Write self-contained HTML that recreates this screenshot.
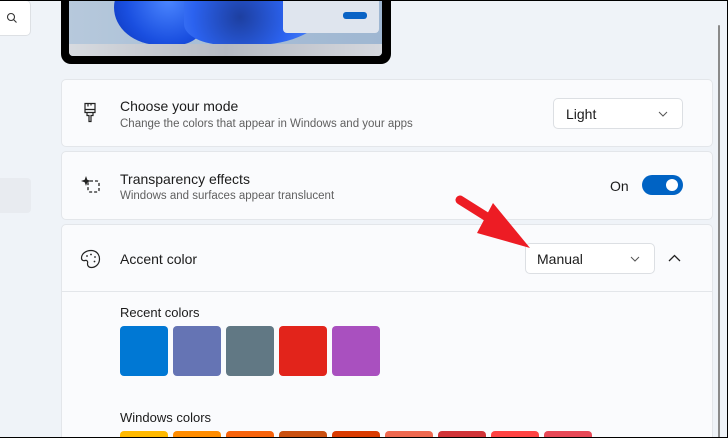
<!DOCTYPE html>
<html style="width:728px;height:438px;overflow:hidden"><head><style>
*{margin:0;padding:0;box-sizing:border-box}
body{width:728px;height:438px;overflow:hidden;background:#eff3f8;font-family:"Liberation Sans",sans-serif;position:relative;color:#1b1b1b}
.abs{position:absolute}
.card{position:absolute;left:61px;width:652px;background:#fafbfd;border:1px solid #e3e6ea;border-radius:5px}
.t{position:absolute;left:58px;font-size:14px;color:#1b1b1b}
.s{position:absolute;left:58px;font-size:11.5px;color:#5f5f5f}
.dd{position:absolute;background:#fff;border:1px solid #dcdfe3;border-radius:5px;font-size:14px}
.sw{position:absolute;width:48px;height:50px;border-radius:4px}
.ws{position:absolute;top:431px;width:48px;height:7px;border-radius:4px 4px 0 0}
</style></head><body>
<div class="abs" style="left:0;top:0;width:31px;height:36px;background:#fff;border:1px solid #dde0e4;border-left:none;border-radius:0 5px 5px 0"></div>
<svg class="abs" style="left:6px;top:12px" width="12" height="12"><circle cx="5" cy="5" r="3.5" fill="none" stroke="#333" stroke-width="1.1"/><line x1="7.6" y1="7.6" x2="10.5" y2="10.5" stroke="#333" stroke-width="1.1"/></svg>
<div class="abs" style="left:0;top:178px;width:31px;height:35px;background:#e8ebf0;border-radius:0 4px 4px 0"></div>
<div class="abs" style="left:61px;top:-10px;width:330px;height:74px;background:#000;border-radius:0 0 10px 10px"></div>
<div class="abs" style="left:69px;top:0;width:313px;height:56px;border-radius:0 0 4px 4px;overflow:hidden;background:linear-gradient(90deg,#b7c9dc,#a9bfd6 40%,#9fb7d2)">
 <div class="abs" style="left:45px;top:-30px;width:90px;height:75px;border-radius:50% 40% 30% 50%;background:radial-gradient(circle at 60% 40%,#4b86ff,#1a4fe0 60%,#0b35b8)"></div>
 <div class="abs" style="left:115px;top:-25px;width:140px;height:70px;border-radius:40% 50% 50% 30%;background:radial-gradient(circle at 40% 60%,#1d3fa0,#2b62ef 50%,#5b95ff)"></div>
 <div class="abs" style="left:214px;top:0;width:96px;height:33px;background:#dfe5ee;border-radius:0 0 4px 4px"></div>
 <div class="abs" style="left:274px;top:12px;width:24px;height:7px;background:#0a63c5;border-radius:3px"></div>
 <div class="abs" style="left:0;top:44px;width:313px;height:12px;background:linear-gradient(90deg,#d8dbe0,#b5b9c2 50%,#d5d8de)"></div>
</div>
<div class="card" style="top:79px;height:68px">
 <svg class="abs" style="left:20px;top:22px" width="16" height="22" viewBox="0 0 16 22"><path d="M3 1.5h10v9H3z M3 7.5h10 M6 1.5v3 M9 1.5v2 M5 10.5v3h2v6h2v-6h2v-3" fill="none" stroke="#222" stroke-width="1.2"/></svg>
 <div class="t" style="top:18px">Choose your mode</div>
 <div class="s" style="top:38px">Change the colors that appear in Windows and your apps</div>
 <div class="dd" style="left:491px;top:18px;width:130px;height:31px"><span class="abs" style="left:12px;top:7px">Light</span><svg class="abs" style="left:104px;top:12px" width="10" height="6"><path d="M1 1l4 4 4-4" fill="none" stroke="#555" stroke-width="1"/></svg></div>
</div>
<div class="card" style="top:151px;height:69px">
 <svg class="abs" style="left:18px;top:23px" width="22" height="20" viewBox="0 0 22 20"><path d="M6 1 L7.3 4.7 11 6 7.3 7.3 6 11 4.7 7.3 1 6 4.7 4.7Z" fill="#222"/><rect x="8" y="6" width="11" height="11" rx="2" fill="none" stroke="#222" stroke-width="1.3" stroke-dasharray="3 2"/></svg>
 <div class="t" style="top:19px">Transparency effects</div>
 <div class="s" style="top:38px">Windows and surfaces appear translucent</div>
 <div class="abs" style="left:548px;top:26px;font-size:14px">On</div>
 <div class="abs" style="left:580px;top:23px;width:41px;height:20px;border-radius:10px;background:#0063c4"><div class="abs" style="left:24px;top:4px;width:12px;height:12px;border-radius:50%;background:#fff"></div></div>
</div>
<div class="card" style="top:224px;height:220px">
 <div class="abs" style="left:0;top:66px;width:650px;height:1px;background:#e3e6ea"></div>
 <svg class="abs" style="left:18px;top:24px" width="22" height="20" viewBox="0 0 22 20"><path d="M11 1.5C5.5 1.5 1.5 5 1.5 9c0 2.5 2 3 3.5 2.5 1.8-.6 3 .8 2.6 2.5-.5 2.300 1 4.5 3.6 4.5 5 0 8.3-4 8.3-8.5S16.5 1.5 11 1.5z" fill="none" stroke="#222" stroke-width="1.2"/><circle cx="7" cy="7" r=".9" fill="#222"/><circle cx="11" cy="5.5" r=".9" fill="#222"/><circle cx="15" cy="8" r=".9" fill="#222"/><circle cx="14.5" cy="12.5" r=".9" fill="#222"/></svg>
 <div class="t" style="top:26px">Accent color</div>
 <div class="dd" style="left:463px;top:18px;width:130px;height:31px"><span class="abs" style="left:11px;top:7px">Manual</span><svg class="abs" style="left:104px;top:12px" width="10" height="6"><path d="M1 1l4 4 4-4" fill="none" stroke="#555" stroke-width="1"/></svg></div>
 <svg class="abs" style="left:606px;top:29px" width="13" height="8"><path d="M1 7l5.5-5.5L12 7" fill="none" stroke="#222" stroke-width="1.3"/></svg>
 <div class="abs" style="left:58px;top:80px;font-size:13px">Recent colors</div>
 <div class="abs" style="left:58px;top:185px;font-size:13px">Windows colors</div>
</div>
<div class="sw" style="left:120px;top:326px;background:#0078d4"></div>
<div class="sw" style="left:173px;top:326px;background:#6574b4"></div>
<div class="sw" style="left:226px;top:326px;background:#617884"></div>
<div class="sw" style="left:279px;top:326px;background:#e2241b"></div>
<div class="sw" style="left:332px;top:326px;background:#a950bf"></div>
<div class="ws" style="left:120px;background:#ffb900"></div>
<div class="ws" style="left:173px;background:#ff8c00"></div>
<div class="ws" style="left:226px;background:#f7630c"></div>
<div class="ws" style="left:279px;background:#ca5010"></div>
<div class="ws" style="left:332px;background:#da3b01"></div>
<div class="ws" style="left:385px;background:#ef6950"></div>
<div class="ws" style="left:438px;background:#d13438"></div>
<div class="ws" style="left:491px;background:#ff4343"></div>
<div class="ws" style="left:544px;background:#e74856"></div>
<div class="abs" style="left:718px;top:25px;width:2px;height:413px;background:#8a8a8a;border-radius:1px"></div>
<div class="abs" style="left:0;top:0;width:728px;height:1px;background:#000"></div>
<div class="abs" style="left:727px;top:0;width:1px;height:438px;background:#000"></div>
<div class="abs" style="left:0;top:437px;width:728px;height:1px;background:#000"></div>
<svg class="abs" style="left:0;top:0" width="728" height="438"><path d="M460 200 L495 222" stroke="#ed1c24" stroke-width="9" stroke-linecap="round"/><path d="M530 248 L493 203 L477 233Z" fill="#ed1c24"/></svg>
</body></html>
